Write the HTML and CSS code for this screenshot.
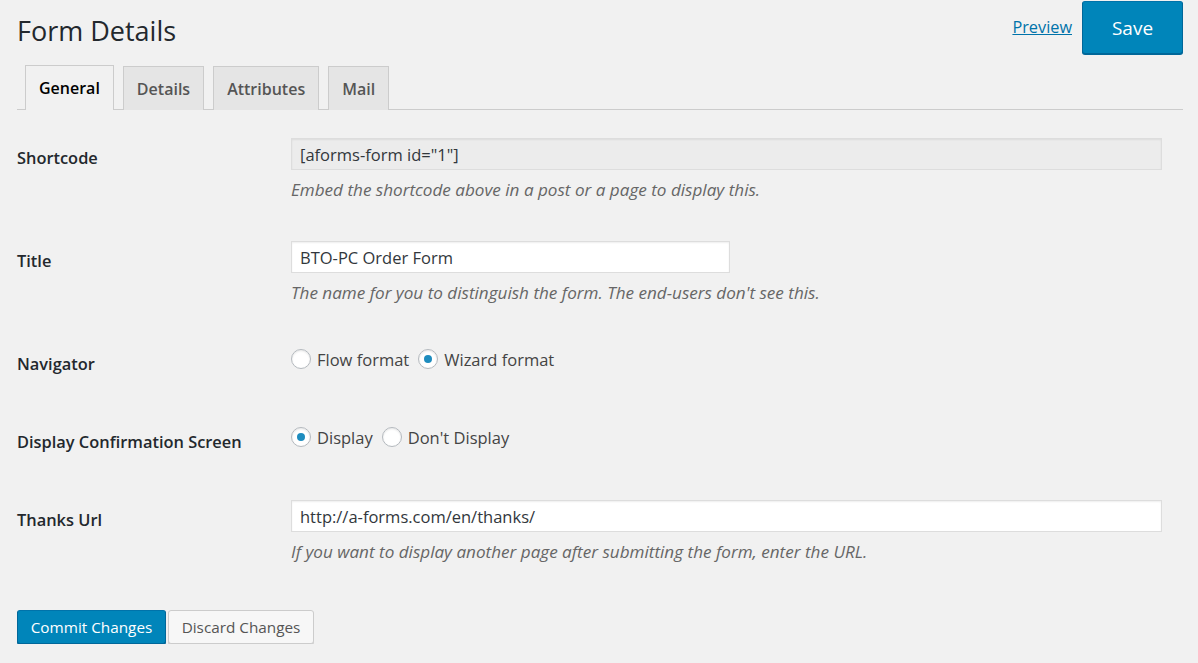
FILE: index.html
```html
<!DOCTYPE html>
<html lang="en">
<head>
<meta charset="utf-8">
<title>Form Details</title>
<link rel="stylesheet" href="styles.css">
</head>
<body>
<div class="wrap">
  <header class="page-head">
    <h1 class="page-title">Form Details</h1>
    <div class="head-actions">
      <a class="preview-link" href="#">Preview</a>
      <button class="btn btn-primary btn-save" type="button">Save</button>
    </div>
  </header>

  <nav class="tabs">
    <a class="tab tab-active" href="#">General</a>
    <a class="tab" href="#">Details</a>
    <a class="tab" href="#">Attributes</a>
    <a class="tab" href="#">Mail</a>
  </nav>

  <form class="form-table">
    <div class="row row-desc">
      <div class="label label-input">Shortcode</div>
      <div class="field">
        <input class="text-input text-input-readonly" type="text" value='[aforms-form id="1"]' readonly>
        <p class="description">Embed the shortcode above in a post or a page to display this.</p>
      </div>
    </div>

    <div class="row row-desc">
      <div class="label label-input">Title</div>
      <div class="field">
        <input class="text-input text-input-short" type="text" value="BTO-PC Order Form">
        <p class="description">The name for you to distinguish the form. The end-users don't see this.</p>
      </div>
    </div>

    <div class="row row-radio row-nav">
      <div class="label label-radio">Navigator</div>
      <div class="field radio-group">
        <label class="radio-label"><span class="radio"></span>Flow format</label>
        <label class="radio-label"><span class="radio radio-checked"></span>Wizard format</label>
      </div>
    </div>

    <div class="row row-radio row-confirm">
      <div class="label label-radio">Display Confirmation Screen</div>
      <div class="field radio-group">
        <label class="radio-label"><span class="radio radio-checked"></span>Display</label>
        <label class="radio-label"><span class="radio"></span>Don't Display</label>
      </div>
    </div>

    <div class="row row-desc">
      <div class="label label-input">Thanks Url</div>
      <div class="field">
        <input class="text-input" type="text" value="http://a-forms.com/en/thanks/">
        <p class="description">If you want to display another page after submitting the form, enter the URL.</p>
      </div>
    </div>

    <div class="actions">
      <button class="btn btn-primary btn-commit" type="button">Commit Changes</button>
      <button class="btn btn-secondary" type="button">Discard Changes</button>
    </div>
  </form>
</div>
</body>
</html>
```

FILE: styles.css
```css
* { box-sizing: border-box; }

html, body {
  margin: 0;
  padding: 0;
  background: #f1f1f1;
}

body {
  font-family: "Open Sans", "Noto Sans", sans-serif;
  color: #23282d;
  font-size: 16px;
}

.wrap {
  width: 1183px;
  padding-left: 17px;
}

.page-head {
  display: flex;
  justify-content: space-between;
  align-items: flex-start;
  height: 54px;
}

.page-title {
  margin: 13px 0 0;
  font-size: 27px;
  font-weight: 400;
  line-height: 36px;
  color: #23282d;
}

.head-actions {
  display: flex;
  align-items: center;
  gap: 10px;
  margin-top: 1px;
}

.preview-link {
  color: #0073aa;
  font-size: 16.3px;
  text-decoration: underline;
  margin-top: -1px;
}

.btn {
  font-family: inherit;
  border-radius: 3px;
  cursor: pointer;
  border: 1px solid;
  padding: 0;
}

.btn-primary {
  background: #0085ba;
  border-color: #0073aa #006799 #006799;
  box-shadow: 0 1px 0 #006799;
  color: #fff;
}

.btn-save {
  width: 101px;
  height: 53px;
  font-size: 19px;
}

.tabs {
  display: flex;
  align-items: flex-end;
  gap: 9px;
  margin-top: 11px;
  padding-left: 8px;
  border-bottom: 1px solid #ccc;
  height: 45px;
}

.tab {
  display: flex;
  align-items: center;
  height: 44px;
  padding: 0 13px;
  margin-bottom: -1px;
  border: 1px solid #ccc;
  border-bottom: none;
  background: #e5e5e5;
  color: #555;
  font-size: 16px;
  font-weight: 600;
  text-decoration: none;
}

.tab-active {
  background: #f1f1f1;
  color: #000;
  height: 45px;
}

.form-table {
  margin-top: 28px;
}

.row {
  display: grid;
  grid-template-columns: 274px 871px;
  align-items: start;
}

.row-desc { min-height: 103px; }
.row-nav { min-height: 78px; margin-top: 4px; }
.row-confirm { min-height: 74px; }

.label {
  font-size: 16.4px;
  font-weight: 600;
  color: #23282d;
  line-height: 22px;
}

.label-input { padding-top: 9px; }
.label-radio { padding-top: 5px; }

.text-input {
  display: block;
  width: 100%;
  height: 32px;
  padding: 0 8px;
  font-family: inherit;
  font-size: 16.5px;
  color: #32373c;
  background: #fff;
  border: 1px solid #ddd;
  box-shadow: inset 0 1px 2px rgba(0, 0, 0, 0.07);
  outline: none;
}

.text-input-readonly {
  background: #ececec;
}

.text-input-short {
  width: 439px;
}

.description {
  margin: 8px 0 0;
  font-size: 17.1px;
  font-style: italic;
  color: #666;
  line-height: 24px;
}

.radio-group {
  display: flex;
  align-items: center;
  gap: 9px;
  height: 22px;
}

.radio-label {
  display: flex;
  align-items: center;
  gap: 6px;
  font-size: 16.5px;
  color: #444;
}

.radio {
  width: 20px;
  height: 20px;
  border-radius: 50%;
  border: 1px solid #b4b9be;
  background: #fff;
  box-shadow: inset 0 1px 2px rgba(0, 0, 0, 0.1);
  display: flex;
  align-items: center;
  justify-content: center;
  flex-shrink: 0;
}

.radio-checked::after {
  content: "";
  width: 8px;
  height: 8px;
  border-radius: 50%;
  background: #1e8cbe;
}

.actions {
  display: flex;
  gap: 2px;
  margin-top: 7px;
}

.btn-commit {
  width: 149px;
  height: 34px;
  font-size: 15.3px;
}

.btn-secondary {
  width: 146px;
  height: 34px;
  font-size: 15.3px;
  background: #f7f7f7;
  border-color: #ccc;
  box-shadow: 0 1px 0 #ccc;
  color: #555;
}
```
